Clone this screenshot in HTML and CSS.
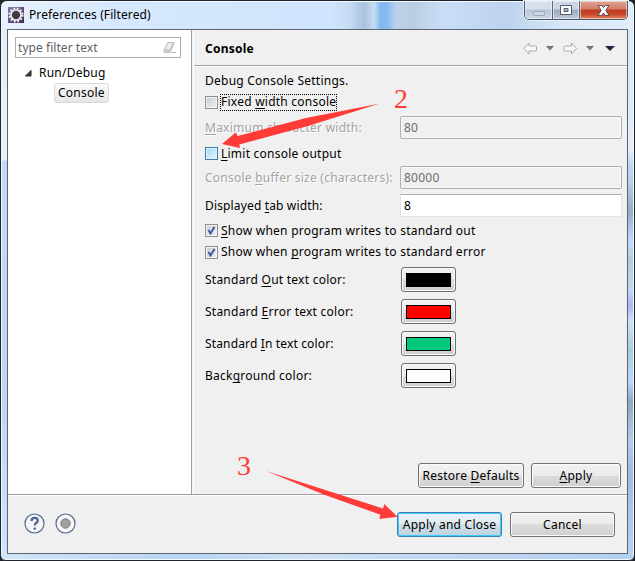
FILE: index.html
```html
<!DOCTYPE html>
<html lang="en">
<head>
<meta charset="utf-8">
<title>Preferences (Filtered)</title>
<link rel="stylesheet" href="styles.css">
</head>
<body>
<div class="window">
  <header class="titlebar">
    <svg class="app-icon" width="16" height="16" viewBox="0 0 16 16">
      <defs><linearGradient id="ec" x1="0" y1="0" x2="1" y2="1"><stop offset="0" stop-color="#8c79b0"/><stop offset="1" stop-color="#3c2850"/></linearGradient></defs>
      <rect width="16" height="16" fill="url(#ec)"/>
      <circle cx="8" cy="8" r="6.500" fill="none" stroke="#f3f1f6" stroke-width="2" stroke-dasharray="1.9 1.5"/>
      <circle cx="8" cy="8" r="5" fill="#3f3a46" stroke="#eeedf0" stroke-width="1.700"/>
    </svg>
    <span class="title">Preferences (Filtered)</span>
    <div class="controls">
      <span class="ctl min"><svg width="12" height="5"><rect x=".5" y=".5" width="11" height="4" rx="1" fill="#ced9e4" stroke="#9aa6b4"/></svg></span>
      <span class="ctl max"><svg width="12" height="10"><path d="M.5.5h11v9H.5zM4 3.5v3h4v-3z" fill="#fff" fill-rule="evenodd" stroke="#515b70"/></svg></span>
      <span class="ctl close"><svg width="13" height="11" viewBox="0 0 13 11"><path d="M1 .5h3.6l1.9 2 1.9-2H12L8.8 5.3 12 10.5H8.5L6.5 8l-2 2.5H1l3.2-5.2z" fill="#fff" stroke="#5c4a58"/></svg></span>
    </div>
  </header>

  <div class="client">
    <main class="upper">
      <nav class="tree">
        <div class="filter"><span>type filter text</span>
          <svg width="17" height="14" viewBox="0 0 17 14"><path d="M6 1.500h5.500l-4.500 10H3Q1 11.500 2 9z" fill="#eee" stroke="#b8b8b8"/><path d="M3 8h5l-1.500 3.500H3Q1 11 3 8z" fill="#ccc"/><path d="M11 1.500l1 1-3.500 8-1.500 1" fill="none" stroke="#bbb"/><path d="M9 11.500h5" stroke="#b8b8b8"/></svg>
        </div>
        <div class="node"><svg width="7" height="7"><path d="M6 .5V6H.5z" fill="#444" stroke="#222"/></svg><span>Run/Debug</span></div>
        <div class="leaf"><span>Console</span></div>
      </nav>
      <section class="page">
        <div class="page-head">
          <h1>Console</h1>
          <svg class="nav" width="94" height="14" viewBox="0 0 94 14">
            <path d="M.8 6.500L6 1v3h6.500q1 0 1 1v3q0 1-1 1H6v3z" fill="#f8f8f8" stroke="#aaa"/>
            <path d="M23 4h8l-4 4.500z" fill="#737278"/>
            <path d="M53.700 6.500L48.500 1v3H42q-1 0-1 1v3q0 1 1 1h6.500v3z" fill="#f8f8f8" stroke="#aaa"/>
            <path d="M63 4h8l-4 4.500z" fill="#737278"/>
            <path d="M82 4h10l-5 5z" fill="#2b1a3c"/>
          </svg>
        </div>
        <div class="form">
          <div class="row r22"><span>Debug Console Settings.</span></div>
          <div class="row r21"><i class="box"></i><span class="focus">Fixed <u>w</u>idth console</span></div>
          <div class="row r29 off"><label><u>M</u>aximum character width:</label><div class="input">80</div></div>
          <div class="row r23"><i class="box hot"></i><span><u>L</u>imit console output</span></div>
          <div class="row r25 off"><label>Console <u>b</u>uffer size (characters):</label><div class="input">80000</div></div>
          <div class="row r31"><label class="snug">Displayed <u>t</u>ab width:</label><div class="input">8</div></div>
          <div class="row r19"><i class="box"><svg width="9" height="9"><path d="M1.500 4l2 3.500L7.500 1" fill="none" stroke="#3f57a0" stroke-width="1.900"/></svg></i><span><u>S</u>how when program writes to standard out</span></div>
          <div class="row r24"><i class="box low"><svg width="9" height="9"><path d="M1.500 4l2 3.500L7.500 1" fill="none" stroke="#3f57a0" stroke-width="1.900"/></svg></i><span>Show when <u>p</u>rogram writes to standard error</span></div>
          <div class="row r32"><label>Standard <u>O</u>ut text color:</label><div class="btn swatch"><b class="black"></b></div></div>
          <div class="row r32"><label>Standard <u>E</u>rror text color:</label><div class="btn swatch"><b class="red"></b></div></div>
          <div class="row r32"><label class="snug">Standard <u>I</u>n text color:</label><div class="btn swatch"><b class="green"></b></div></div>
          <div class="row r32"><label>Back<u>g</u>round color:</label><div class="btn swatch"><b class="white"></b></div></div>
        </div>
        <div class="page-actions">
          <div class="btn restore"><span>Restore <u>D</u>efaults</span></div>
          <div class="btn apply"><span><u>A</u>pply</span></div>
        </div>
      </section>
    </main>
    <footer class="foot">
      <svg width="52" height="22" viewBox="0 0 52 22">
        <circle cx="10.500" cy="10.500" r="9.500" fill="#f4f5f8" stroke="#566b91" stroke-width="1.200"/>
        <path d="M7.500 8q0-3.200 3.200-3.200 3.100 0 3.100 2.700 0 1.500-1.600 2.500-1.400.9-1.400 2.500" fill="none" stroke="#4d6389" stroke-width="2.200"/>
        <rect x="9.500" y="14.400" width="2.400" height="2.400" rx=".8" fill="#4d6389"/>
        <circle cx="41.500" cy="10.500" r="9.500" fill="#f8f8fa" stroke="#566b91" stroke-width="1.200"/>
        <circle cx="41.500" cy="10.500" r="4.700" fill="#a0a0a0" stroke="#777"/>
      </svg>
      <div class="foot-actions">
        <div class="btn default"><span>Apply and Close</span></div>
        <div class="btn cancel"><span>Cancel</span></div>
      </div>
    </footer>
  </div>
</div>
<svg class="notes" width="635" height="561" viewBox="0 0 635 561">
  <path d="M379 103.700L306 118 237.600 136 235.700 132.500 222 144 240 148 239.300 144.500 308 126z"/>
  <path d="M266 471L383 508.500 384.300 504 397.500 516.700 379.300 519 380.500 514.700 325 495z"/>
  <text x="394" y="108">2</text>
  <text x="237" y="475">3</text>
</svg>
</body>
</html>
```
FILE: styles.css
```css
* { box-sizing: border-box; }
body {
  margin: 0;
  background: #20242c;
  font: 12px/16px "Noto Sans", "Open Sans", sans-serif;
  letter-spacing: .24px;
  color: #000;
}
u { text-decoration: underline; text-underline-offset: 2px; text-decoration-thickness: 1px; text-decoration-skip-ink: none; }
span, label, h1 { white-space: nowrap; }
svg { display: block; flex: none; }

.window {
  width: 635px; height: 561px;
  display: flex; flex-direction: column;
  padding: 1px 1px 2px;
  border-radius: 7px 7px 6px 6px;
  background:
    linear-gradient(90deg, #d0e3f8, #b9d5f3 30%, #cfe1f3 48%, #bfd8f4 70%, #b5d0ed) 0 100% / 100% 7px no-repeat,
    linear-gradient(#dce9f8 0 90px, #e5edf7 150px, #bcd6f3 165px, #b9d2ec 180px, #94aec8 210px, #bfdbfa 240px, #b2cee0 260px, #c1d8f3 290px, #a8b7f1 304px, #cce2f8 320px, #a9cce1 350px, #bbd8f7 380px, #8daac4 400px, #b3cde9 440px, #9fbdda 470px, #b8d4f0) 100% 0 / 8px 100% no-repeat,
    linear-gradient(#e3edf9, #eaf1fa 159px, #c3daf5 160px, #c0d6ef 400px, #d0e5fd) 0 0 / 8px 100% no-repeat,
    #cfe4fc;
  border: 1px solid #20242c;
  box-shadow: inset 0 0 0 1px #f2f8ff;
}
.titlebar {
  flex: 0 0 27px; margin: 0 1px;
  display: flex; align-items: flex-start;
  padding-left: 5px;
  background: linear-gradient(90deg, #e8f2fd 0, #d6e8fd 18%, #cfe4fd 52%, #c8dcf4 55%, #abc2dd 57.5%, #c8ddf5 59%, #84b9f2 60%, #84b9f2 61%, #bdd2ea 62.5%, #b9cce4 65%, #c9def6 70%, #bdd3ee 80%, #d8e8f8 90%, #e1edf9);
}
.app-icon { margin-top: 5px; }
.title { margin: 5px 0 0 5px; letter-spacing: .1px; }
.controls {
  margin-left: auto; margin-top: -1px; margin-right: 4px;
  width: 104px; height: 19px; display: flex;
  border: 1px solid #4b5567; border-top: 0; border-radius: 0 0 5px 5px; overflow: hidden;
  box-shadow: 0 0 0 1px #e7f1fc;
}
.ctl { display: flex; align-items: center; justify-content: center; border-right: 1px solid #59657a; box-shadow: inset 0 0 0 1px #ffffff80; }
.min { width: 28px; padding-top: 6px; background: linear-gradient(#d6e0eb 45%, #b7c5d5 50%, #cbd9e8); }
.max { width: 27px; background: linear-gradient(#cbd7e5 45%, #9aaabd 50%, #bccbdc); }
.close { width: 47px; border-right: 0; background: linear-gradient(#e2a494, #d27c69 45%, #bc3b22 50%, #c9482c 75%, #e58a66); }

.client {
  margin: 0 5px; flex: 0 0 525px;
  border: 1px solid #5c6670;
  background: #f0f0f0;
  display: flex; flex-direction: column;
}
.upper { flex: 0 0 465px; display: flex; border-bottom: 1px solid #a0a0a0; }
.tree { flex: 0 0 184px; background: #fff; border-right: 1px solid #a0a0a0; padding: 7px 0 0 7px; }
.filter {
  width: 166px; height: 21px; border: 1px solid #abadb3; padding: 0 1px 0 2px;
  display: flex; align-items: center; justify-content: space-between; color: #5f5f5f;
  letter-spacing: .05px;
}
.node { display: flex; align-items: center; height: 16px; margin-top: 7px; padding-left: 10px; gap: 7px; }
.leaf {
  width: 55px; height: 20px; margin: 2px 0 0 39px; padding-left: 3px; line-height: 18px;
  border: 1px solid #d9d9d9; border-radius: 3px; background: linear-gradient(#fafafa, #e6e6e6);
}
.page { flex: 1; margin-left: 1px; border-left: 1px solid #fff; display: flex; flex-direction: column; }
.page-head {
  flex: 0 0 36px; border-bottom: 1px solid #a0a0a0;
  display: flex; align-items: center; justify-content: space-between; padding: 3px 10px 0 11px;
  box-shadow: 0 1px #fff;
}
h1 { margin: 0; font-size: 12px; font-weight: 700; }
.form { padding: 4px 5px 0 11px; flex: 1; }
.row { display: flex; align-items: center; }
.r19 { height: 19px; } .r21 { height: 21px; } .r22 { height: 22px; } .r23 { height: 23px; }
.r24 { height: 24px; } .r25 { height: 25px; } .r29 { height: 29px; } .r31 { height: 31px; } .r32 { height: 32px; }
.row label { flex: 0 0 195px; }
.snug { letter-spacing: .15px; }
.off label { color: #a3a3a3; text-shadow: 1px 1px #fff; }
.input {
  flex: 1; height: 23px; border: 1px solid #e2e3ea; border-top-color: #abadb3; border-radius: 1px;
  background: #fff; padding: 0 3px; line-height: 22px;
}
.off .input { background: #f0f0f0; border-color: #afafaf; color: #6d6d6d; border-radius: 2px; box-shadow: inset 0 0 0 1px #f8f8f8; }
.box {
  width: 13px; height: 13px; margin-right: 3px; flex: none;
  border: 1px solid #8e8f8f; background: linear-gradient(135deg, #c3c9d0, #f4f4f5); box-shadow: inset 0 0 0 1px #f4f4f4;
  display: flex; align-items: center; justify-content: center;
}
.low { margin-top: 1px; }
.hot { border-color: #3c7fb1; background: linear-gradient(135deg, #a5d9f5, #e6f5fc); box-shadow: inset 0 0 0 1px #def3fd; }
.focus { border: 1px dotted #000; height: 17px; line-height: 14px; margin-left: -1px; }
.btn {
  height: 25px; border: 1px solid #707070; border-radius: 3px;
  background: linear-gradient(#f2f2f2, #ebebeb 50%, #dddddd 50%, #cfcfcf);
  box-shadow: inset 0 0 0 1px #fafafa;
  display: flex; align-items: center; justify-content: center;
}
.swatch { width: 55px; margin: 0 0 1px 1px; }
.swatch b { width: 45px; height: 14px; border: 1px solid #000; margin-top: 1px; }
.black { background: #000; } .red { background: #f00; } .green { background: #00c87d; } .white { background: #fff; }
.page-actions { display: flex; justify-content: flex-end; gap: 7px; padding: 0 6px 6px 0; }
.restore { width: 106px; } .apply { width: 90px; }
.foot { flex: 1; border-top: 1px solid #fff; display: flex; align-items: flex-start; justify-content: space-between; padding: 17px 12px 0 16px; }
.foot-actions { display: flex; gap: 8px; margin-top: -1px; }
.default { width: 105px; border-color: #3c7fb1; background: linear-gradient(#eaf2f6, #dfebf1 50%, #cfdfe8 50%, #bdd3df); box-shadow: inset 0 0 0 1px #3fcdf7; }
.cancel { width: 105px; }
.notes { position: absolute; left: 0; top: 0; fill: #ff3b37; letter-spacing: 0; }
.notes text { font: 28px "Liberation Serif", serif; }
```
